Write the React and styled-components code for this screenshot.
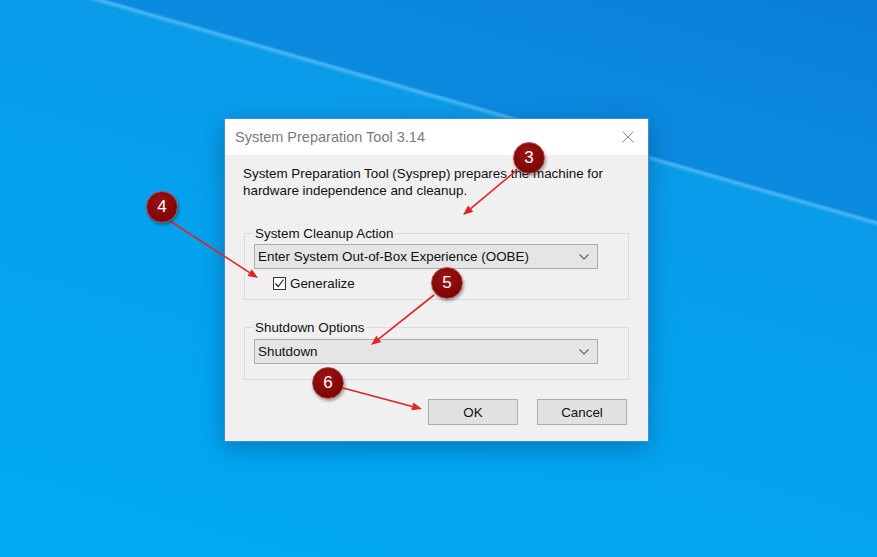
import styled, { createGlobalStyle } from "styled-components";

const GlobalStyle = createGlobalStyle`
  html, body {
    margin: 0;
    padding: 0;
    overflow: hidden;
  }
  body {
    font-family: "Liberation Sans", Arial, sans-serif;
  }
`;

const Desktop = styled.div`
  position: relative;
  width: 877px;
  height: 557px;
  box-sizing: border-box;
  padding: 118px 0 0 224px;
  background: linear-gradient(
    196deg,
    #0a7fd8 0%,
    #0b8ae0 27.2%,
    #4ab7f4 27.55%,
    #0a9be9 28.1%,
    #05a1ee 50%,
    #01a9f2 100%
  );
  overflow: hidden;
`;

const Dialog = styled.div`
  width: 425px;
  box-sizing: border-box;
  border: 1px solid #3d8fd0;
  background: #f0f0f0;
  box-shadow: 0 6px 22px rgba(0, 40, 90, 0.35);
  font-size: 13.4px;
  color: #111;
`;

const TitleBar = styled.div`
  height: 36px;
  background: #fff;
  display: flex;
  align-items: center;
  justify-content: space-between;
  padding: 0 14px 0 10px;
`;

const Title = styled.span`
  font-size: 14.5px;
  color: #7a7a7a;
`;

const Body = styled.div`
  padding: 10px 19px 16px 18px;
  display: flex;
  flex-direction: column;
`;

const Description = styled.p`
  margin: 0 0 27px 0;
  line-height: 17px;
`;

const GroupBox = styled.fieldset`
  margin: 0 0 ${(p) => p.$gap || 0}px 1px;
  border: 1px solid #dcdcdc;
  padding: ${(p) => p.$pad};
  min-width: 0;
`;

const Legend = styled.legend`
  padding: 0 2px;
  margin-left: -1px;
  line-height: 15px;
`;

const Select = styled.div`
  height: 25px;
  box-sizing: border-box;
  border: 1px solid #adadad;
  background: #e5e5e5;
  display: flex;
  align-items: center;
  justify-content: space-between;
  padding: 0 8px 0 3px;
`;

const CheckRow = styled.div`
  display: flex;
  align-items: center;
  gap: 4px;
  margin: 7px 0 0 19px;
  height: 14px;
`;

const CheckBox = styled.span`
  width: 13px;
  height: 13px;
  box-sizing: border-box;
  border: 1px solid #333;
  background: #fff;
  display: flex;
  align-items: center;
  justify-content: center;
`;

const ButtonRow = styled.div`
  display: flex;
  justify-content: flex-end;
  gap: 19px;
  margin-top: 19px;
  padding-right: 2px;
`;

const Button = styled.button`
  width: 90px;
  height: 26px;
  box-sizing: border-box;
  border: 1px solid #adadad;
  background: #e1e1e1;
  font-family: "Liberation Sans", Arial, sans-serif;
  font-size: 13.4px;
  color: #111;
  padding: 0;
`;

const Overlay = styled.svg`
  position: absolute;
  left: 0;
  top: 0;
  pointer-events: none;
`;

const Badge = styled.div`
  position: absolute;
  left: ${(p) => p.$x - 16}px;
  top: ${(p) => p.$y - 16}px;
  width: 32px;
  height: 32px;
  box-sizing: border-box;
  border-radius: 50%;
  border: 1px solid #b54545;
  background: radial-gradient(circle at 45% 35%, #9c1414 0%, #820808 60%, #6a0303 100%);
  box-shadow: 1px 2px 3px rgba(0, 0, 0, 0.35);
  color: #fff;
  font-size: 17px;
  display: flex;
  align-items: center;
  justify-content: center;
`;

const Chevron = () => (
  <svg width="10" height="6" viewBox="0 0 10 6">
    <polyline points="0.5,0.5 5,5 9.5,0.5" fill="none" stroke="#606060" strokeWidth="1.1" />
  </svg>
);

const CloseIcon = () => (
  <svg width="12" height="12" viewBox="0 0 12 12">
    <path d="M0.5 0.5 L11.5 11.5 M11.5 0.5 L0.5 11.5" stroke="#8a8a8a" strokeWidth="1" />
  </svg>
);

const arrows = [
  [517, 170, 463, 215],
  [170, 221, 258, 278],
  [434, 295, 371, 345],
  [343, 388, 422, 409],
];

const badges = [
  { n: 3, x: 529, y: 158 },
  { n: 4, x: 162, y: 207 },
  { n: 5, x: 447, y: 283 },
  { n: 6, x: 328, y: 383 },
];

function Arrow({ x1, y1, x2, y2 }) {
  const a = Math.atan2(y2 - y1, x2 - x1);
  const len = 10;
  const w = 4;
  const bx = x2 - len * Math.cos(a);
  const by = y2 - len * Math.sin(a);
  const px = -Math.sin(a) * w;
  const py = Math.cos(a) * w;
  return (
    <g>
      <line x1={x1} y1={y1} x2={bx} y2={by} stroke="#e02424" strokeWidth="1.6" />
      <polygon
        points={`${x2},${y2} ${bx + px},${by + py} ${bx - px},${by - py}`}
        fill="#e02424"
      />
    </g>
  );
}

export default function App() {
  return (
    <>
      <GlobalStyle />
      <Desktop>
        <Dialog>
          <TitleBar>
            <Title>System Preparation Tool 3.14</Title>
            <CloseIcon />
          </TitleBar>
          <Body>
            <Description>
              System Preparation Tool (Sysprep) prepares the machine for
              <br />
              hardware independence and cleanup.
            </Description>
            <GroupBox $pad="3px 30px 9px 9px" $gap={20}>
              <Legend>System Cleanup Action</Legend>
              <Select>
                <span>Enter System Out-of-Box Experience (OOBE)</span>
                <Chevron />
              </Select>
              <CheckRow>
                <CheckBox>
                  <svg width="11" height="11" viewBox="0 0 11 11">
                    <polyline points="1.5,5.5 4.2,8.5 9.5,1.5" fill="none" stroke="#222" strokeWidth="1.2" />
                  </svg>
                </CheckBox>
                <span>Generalize</span>
              </CheckRow>
            </GroupBox>
            <GroupBox $pad="4px 30px 15px 9px">
              <Legend>Shutdown Options</Legend>
              <Select>
                <span>Shutdown</span>
                <Chevron />
              </Select>
            </GroupBox>
            <ButtonRow>
              <Button>OK</Button>
              <Button>Cancel</Button>
            </ButtonRow>
          </Body>
        </Dialog>
        <Overlay width="877" height="557">
          {arrows.map(([x1, y1, x2, y2], i) => (
            <Arrow key={i} x1={x1} y1={y1} x2={x2} y2={y2} />
          ))}
        </Overlay>
        {badges.map((b) => (
          <Badge key={b.n} $x={b.x} $y={b.y}>
            {b.n}
          </Badge>
        ))}
      </Desktop>
    </>
  );
}
